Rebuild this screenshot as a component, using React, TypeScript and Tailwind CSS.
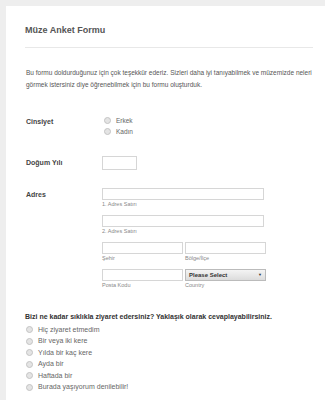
const font = { fontFamily: '"Liberation Sans", Arial, sans-serif' }

function Radio({ label, small }: { label: string; small?: boolean }) {
  return (
    <div className={small ? 'flex items-center gap-[5px] h-[11px]' : 'flex items-center gap-[5px] h-[11.5px]'}>
      <span className="w-[7px] h-[7px] rounded-full border border-[#c4c4c4] bg-[#e4e4e4] shrink-0" />
      <span className={small ? 'text-[6.5px] text-[#666]' : 'text-[7px] text-[#666]'}>{label}</span>
    </div>
  )
}

function Field({ w, label, select }: { w: string; label: string; select?: boolean }) {
  return (
    <div className="flex flex-col">
      {select ? (
        <div className={`${w} h-[12px] border border-[#bbb] bg-gradient-to-b from-[#f4f4f4] to-[#dcdcdc] flex items-center justify-between px-[3px]`}>
          <span className="text-[6px] font-bold text-[#333]">Please Select</span>
          <span className="text-[4px] text-[#333]">▼</span>
        </div>
      ) : (
        <div className={`${w} h-[12px] border border-[#d6d6d6] bg-white`} />
      )}
      <span className="text-[5.5px] text-[#888] mt-[1px] leading-[7px]">{label}</span>
    </div>
  )
}

export default function App() {
  const options = [
    'Hiç ziyaret etmedim',
    'Bir veya iki kere',
    'Yılda bir kaç kere',
    'Ayda bir',
    'Haftada bir',
    'Burada yaşıyorum denilebilir!',
  ]

  return (
    <div className="min-h-screen bg-[#eeeeee] pl-[6px] pt-[6px]" style={font}>
      <div className="bg-white pl-[19px] pr-[12px] pb-[20px] min-h-[394px]">
        <h1 className="pt-[18px] text-[9px] leading-[12px] font-bold text-[#555]">Müze Anket Formu</h1>
        <div className="mt-[11px] border-t border-[#e8e8e8]" />

        <p className="mt-[19px] text-[6.5px] leading-[12px] text-[#555] pl-[1px]">
          Bu formu doldurduğunuz için çok teşekkür ederiz. Sizleri daha iyi tanıyabilmek ve müzemizde neleri
          görmek istersiniz diye öğrenebilmek için bu formu oluşturduk.
        </p>

        <div className="mt-[24px] flex">
          <div className="w-[77px] pl-[1px] text-[7px] font-bold text-[#444] leading-[10px] pt-[2px]">Cinsiyet</div>
          <div className="flex flex-col pl-[2px]">
            <Radio label="Erkek" small />
            <Radio label="Kadın" small />
          </div>
        </div>

        <div className="mt-[18px] flex items-center">
          <div className="w-[77px] pl-[1px] text-[7px] font-bold text-[#444] pt-[1px]">Doğum Yılı</div>
          <div className="w-[35px] h-[14px] border border-[#d6d6d6] mt-[1px]" />
        </div>

        <div className="mt-[18px] flex">
          <div className="w-[77px] pl-[1px] text-[7px] font-bold text-[#444] leading-[10px] pt-[2px]">Adres</div>
          <div className="flex flex-col gap-[7px]">
            <Field w="w-[162px]" label="1. Adres Satırı" />
            <Field w="w-[162px]" label="2. Adres Satırı" />
            <div className="flex gap-[2px]">
              <Field w="w-[81px]" label="Şehir" />
              <Field w="w-[81px]" label="Bölge/İlçe" />
            </div>
            <div className="flex gap-[2px]">
              <Field w="w-[81px]" label="Posta Kodu" />
              <Field w="w-[81px]" label="Country" select />
            </div>
          </div>
        </div>

        <div className="mt-[23px] text-[7px] font-bold text-[#333] leading-[10px]">
          Bizi ne kadar sıklıkla ziyaret edersiniz? Yaklaşık olarak cevaplayabilirsiniz.
        </div>
        <div className="mt-[2px] pl-[1px] flex flex-col">
          {options.map((o) => (
            <Radio key={o} label={o} />
          ))}
        </div>
      </div>
    </div>
  )
}
